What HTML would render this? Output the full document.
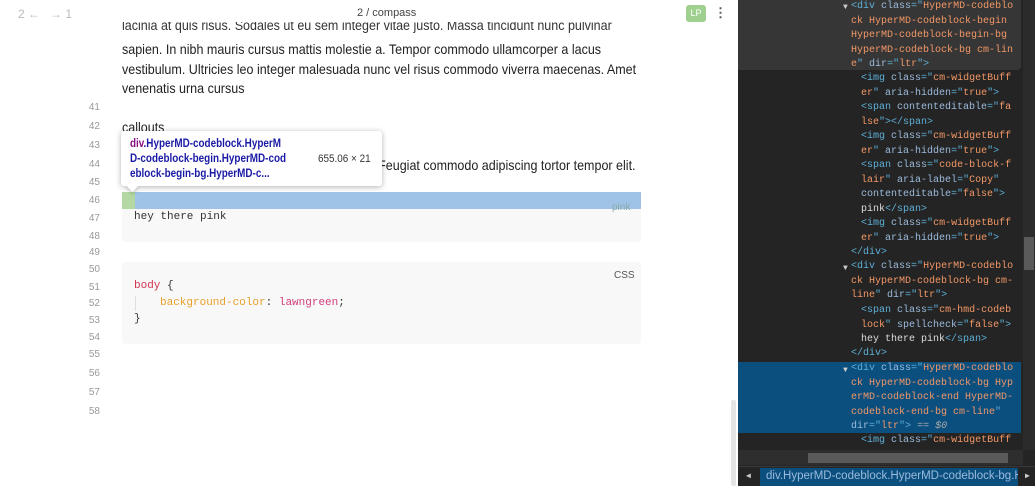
<!DOCTYPE html>
<html><head><style>
*{margin:0;padding:0;box-sizing:border-box}
body{width:1035px;height:486px;overflow:hidden;position:relative;background:#fff;font-family:"Liberation Sans",sans-serif}
.a{position:absolute;white-space:nowrap}
.ln{position:absolute;left:80px;width:20px;text-align:right;font-size:10px;color:#999}
.p{position:absolute;left:122px;font-size:14px;color:#222;white-space:nowrap;transform:scaleX(0.894);transform-origin:left top}
.m{font-family:"Liberation Mono",monospace}
#dt{position:absolute;left:738px;top:0;width:297px;height:486px;background:#242424;font-family:"Liberation Mono",monospace;font-size:10px;color:#ccc}
.d{position:absolute;white-space:nowrap;line-height:14.5px}
.t{color:#5db0d7}.at{color:#9bbbdc}.v{color:#f29766}.w{color:#ddd}
</style></head><body>
<div class="a" style="left:18px;top:7px;font-size:12px;color:#bbb">2 ← &nbsp;&nbsp;→ 1</div>
<div class="a" style="left:357px;top:7px;font-size:11px;color:#444">2 / compass</div>
<div class="a" style="left:686px;top:5px;width:20px;height:17px;background:#9fd08f;border-radius:3px;font-size:9px;color:#fff;text-align:center;line-height:17px">LP</div>
<div class="a" style="left:714px;top:5px;font-size:13px;color:#555;font-weight:bold">⋮</div>
<div class="p" style="top:22px;height:12px;overflow:hidden;line-height:6px;color:#333">lacinia at quis risus. Sodales ut eu sem integer vitae justo. Massa tincidunt nunc pulvinar</div>
<div class="p" style="top:41px">sapien. In nibh mauris cursus mattis molestie a. Tempor commodo ullamcorper a lacus</div>
<div class="p" style="top:61px">vestibulum. Ultricies leo integer malesuada nunc vel risus commodo viverra maecenas. Amet</div>
<div class="p" style="top:80px">venenatis urna cursus</div>
<div class="p" style="top:119px">callouts</div>
<div class="a" style="right:399px;top:157px;font-size:14px;color:#222;transform:scaleX(0.894);transform-origin:right top">Lorem ipsum dolor sit amet. Feugiat commodo adipiscing tortor tempor elit.</div>
<div class="ln" style="top:102px">41</div><div class="ln" style="top:121px">42</div><div class="ln" style="top:140px">43</div><div class="ln" style="top:159px">44</div><div class="ln" style="top:177px">45</div><div class="ln" style="top:195px">46</div><div class="ln" style="top:213px">47</div><div class="ln" style="top:231px">48</div><div class="ln" style="top:247px">49</div><div class="ln" style="top:264px">50</div><div class="ln" style="top:282px">51</div><div class="ln" style="top:298px">52</div><div class="ln" style="top:315px">53</div><div class="ln" style="top:332px">54</div><div class="ln" style="top:349px">55</div><div class="ln" style="top:368px">56</div><div class="ln" style="top:387px">57</div><div class="ln" style="top:406px">58</div>
<div class="a" style="left:122px;top:192px;width:519px;height:50px;background:#f8f8f8;border-radius:4px"></div>
<div class="a" style="left:122px;top:192px;width:519px;height:17px;background:#9fc3e7"></div>
<div class="a" style="left:122px;top:192px;width:13px;height:17px;background:#b4d8a3"></div>
<div class="a" style="left:612px;top:202px;font-size:10px;color:#8aa">pink</div>
<div class="a m" style="left:134px;top:211px;font-size:11px;color:#333">hey there pink</div>
<div class="a" style="left:122px;top:262px;width:519px;height:82px;background:#f8f8f8;border-radius:4px"></div>
<div class="a" style="left:614px;top:270px;font-size:10px;color:#555">CSS</div>
<div class="a m" style="left:134px;top:280px;font-size:11px;color:#d2334d">body <span style="color:#333">{</span></div>
<div class="a" style="left:135px;top:296px;width:1px;height:15px;background:#ddd"></div>
<div class="a m" style="left:160px;top:297px;font-size:11px;color:#e8a02a">background-color<span style="color:#333">:</span> <span style="color:#d23d7d">lawngreen</span><span style="color:#333">;</span></div>
<div class="a m" style="left:134px;top:313px;font-size:11px;color:#333">}</div>
<div class="a" style="left:121px;top:131px;width:261px;height:55px;background:#fff;border-radius:3px;box-shadow:0 1px 6px rgba(0,0,0,.3)"></div>
<div class="a" style="left:128px;top:181px;width:9px;height:9px;background:#fff;transform:rotate(45deg);box-shadow:2px 2px 3px rgba(0,0,0,.15)"></div>
<div class="a" style="left:130px;top:137px;font-size:11.5px;font-weight:bold;color:#1a1aa6;line-height:15px;transform:scaleX(0.86);transform-origin:left top"><span style="color:#881280">div</span>.HyperMD-codeblock.HyperM<br>D-codeblock-begin.HyperMD-cod<br>eblock-begin-bg.HyperMD-c...</div>
<div class="a" style="left:318px;top:153px;font-size:11px;color:#333;transform:scaleX(0.9);transform-origin:left top">655.06 × 21</div>
<div class="a" style="left:731px;top:400px;width:5px;height:86px;background:#e4e4e4;border-radius:2px"></div>
<div id="dt">
<div class="d" style="left:0;top:0;width:283px;height:70px;background:#363636;border-radius:0 0 4px 0"></div>
<div class="d" style="left:0;top:362px;width:283px;height:71px;background:#0b4f7f"></div>
<div class="d" style="left:105px;top:1px;font-size:8px;color:#ccc">▼</div>
<div class="d" style="left:113px;top:0"><span class="t">&lt;div</span> <span class="at">class</span><span class="t">="</span><span class="v">HyperMD-codeblo</span><br><span class="v">ck HyperMD-codeblock-begin</span><br><span class="v">HyperMD-codeblock-begin-bg</span><br><span class="v">HyperMD-codeblock-bg cm-lin</span><br><span class="v">e</span><span class="t">"</span> <span class="at">dir</span><span class="t">="</span><span class="v">ltr</span><span class="t">"&gt;</span></div>
<div class="d" style="left:123px;top:72px"><span class="t">&lt;img</span> <span class="at">class</span><span class="t">="</span><span class="v">cm-widgetBuff</span><br><span class="v">er</span><span class="t">"</span> <span class="at">aria-hidden</span><span class="t">="</span><span class="v">true</span><span class="t">"&gt;</span><br><span class="t">&lt;span</span> <span class="at">contenteditable</span><span class="t">="</span><span class="v">fa</span><br><span class="v">lse</span><span class="t">"&gt;&lt;/span&gt;</span><br><span class="t">&lt;img</span> <span class="at">class</span><span class="t">="</span><span class="v">cm-widgetBuff</span><br><span class="v">er</span><span class="t">"</span> <span class="at">aria-hidden</span><span class="t">="</span><span class="v">true</span><span class="t">"&gt;</span><br><span class="t">&lt;span</span> <span class="at">class</span><span class="t">="</span><span class="v">code-block-f</span><br><span class="v">lair</span><span class="t">"</span> <span class="at">aria-label</span><span class="t">="</span><span class="v">Copy</span><span class="t">"</span><br><span class="at">contenteditable</span><span class="t">="</span><span class="v">false</span><span class="t">"&gt;</span><br><span class="w">pink</span><span class="t">&lt;/span&gt;</span><br><span class="t">&lt;img</span> <span class="at">class</span><span class="t">="</span><span class="v">cm-widgetBuff</span><br><span class="v">er</span><span class="t">"</span> <span class="at">aria-hidden</span><span class="t">="</span><span class="v">true</span><span class="t">"&gt;</span></div>
<div class="d" style="left:113px;top:246px"><span class="t">&lt;/div&gt;</span></div>
<div class="d" style="left:105px;top:262px;font-size:8px">▼</div>
<div class="d" style="left:113px;top:260px"><span class="t">&lt;div</span> <span class="at">class</span><span class="t">="</span><span class="v">HyperMD-codeblo</span><br><span class="v">ck HyperMD-codeblock-bg cm-</span><br><span class="v">line</span><span class="t">"</span> <span class="at">dir</span><span class="t">="</span><span class="v">ltr</span><span class="t">"&gt;</span></div>
<div class="d" style="left:123px;top:304px"><span class="t">&lt;span</span> <span class="at">class</span><span class="t">="</span><span class="v">cm-hmd-codeb</span><br><span class="v">lock</span><span class="t">"</span> <span class="at">spellcheck</span><span class="t">="</span><span class="v">false</span><span class="t">"&gt;</span><br><span class="w">hey there pink</span><span class="t">&lt;/span&gt;</span></div>
<div class="d" style="left:113px;top:347px"><span class="t">&lt;/div&gt;</span></div>
<div class="d" style="left:105px;top:364px;font-size:8px">▼</div>
<div class="d" style="left:113px;top:362px"><span class="t">&lt;div</span> <span class="at">class</span><span class="t">="</span><span class="v">HyperMD-codeblo</span><br><span class="v">ck HyperMD-codeblock-bg Hyp</span><br><span class="v">erMD-codeblock-end HyperMD-</span><br><span class="v">codeblock-end-bg cm-line</span><span class="t">"</span><br><span class="at">dir</span><span class="t">="</span><span class="v">ltr</span><span class="t">"&gt;</span> <span style="color:#aaa;font-style:italic">== $0</span></div>
<div class="d" style="left:123px;top:434px"><span class="t">&lt;img</span> <span class="at">class</span><span class="t">="</span><span class="v">cm-widgetBuff</span></div>
<div class="d" style="left:285px;top:0;width:12px;height:450px;background:#2b2b2b"></div>
<div class="d" style="left:286px;top:237px;width:10px;height:33px;background:#5a5a5a"></div>
<div class="d" style="left:0;top:450px;width:285px;height:15px;background:#2e2e2e"></div>
<div class="d" style="left:70px;top:453px;width:200px;height:10px;background:#5a5a5a"></div>
<div class="d" style="left:0;top:466px;width:297px;height:20px;background:#242424;border-top:1px solid #3a3a3a"></div>
<div class="d" style="left:22px;top:468px;width:258px;height:18px;background:#0b4f7f;overflow:hidden"><span style="position:absolute;left:6px;top:1px;font-family:'Liberation Sans',sans-serif;font-size:11.5px;color:#9bbbdc">div.HyperMD-codeblock.HyperMD-codeblock-bg.Hype</span></div>
<div class="d" style="left:8px;top:470px;font-size:8px;color:#ccc">◀</div>
<div class="d" style="left:287px;top:470px;font-size:8px;color:#ccc">▶</div>
</div>
</body></html>
